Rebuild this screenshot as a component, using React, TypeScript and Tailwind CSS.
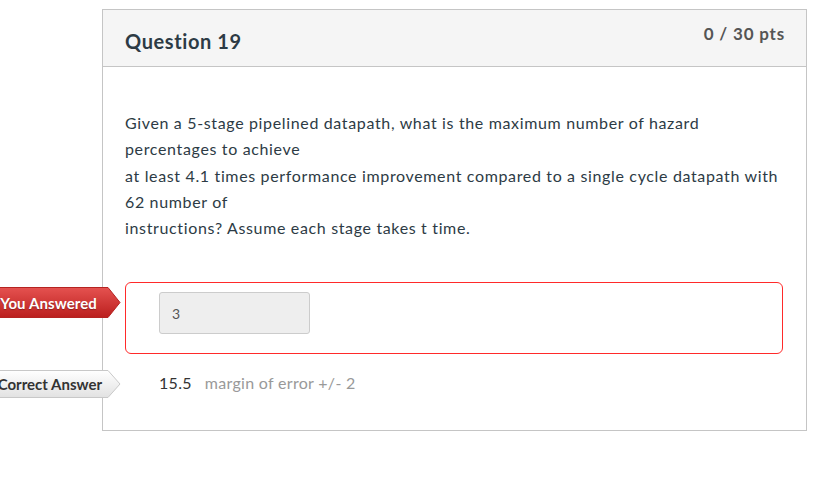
import React from "react";

function Badge({
  label,
  top,
  height,
  variant,
}: {
  label: string;
  top: number;
  height: number;
  variant: "red" | "gray";
}) {
  const w = 121;
  const tip = 13;
  const red = variant === "red";
  return (
    <div
      className="absolute left-[-125px] w-[121px]"
      style={{ top, height }}
    >
      <svg width={w} height={height} className="absolute inset-0">
        <defs>
          <linearGradient id={`g-${variant}`} x1="0" y1="0" x2="0" y2="1">
            {red ? (
              <>
                <stop offset="0" stopColor="#e55250" />
                <stop offset="1" stopColor="#bb1f1e" />
              </>
            ) : (
              <>
                <stop offset="0" stopColor="#ffffff" />
                <stop offset="1" stopColor="#e2e2e2" />
              </>
            )}
          </linearGradient>
        </defs>
        <polygon
          points={`-2,0.5 ${w - tip},0.5 ${w - 1},${height / 2} ${w - tip},${height - 0.5} -2,${height - 0.5}`}
          fill={`url(#g-${variant})`}
          stroke={red ? "#b52321" : "#c8c8c8"}
          strokeWidth={1}
        />
      </svg>
      <div
        className={`absolute inset-0 flex items-center justify-end text-[15px] font-bold ${
          red
            ? "pr-[24px] tracking-[0.1px] text-white [text-shadow:0_1px_1px_rgba(0,0,0,0.3)]"
            : "pr-[19px] tracking-[0px] text-[#333]"
        }`}
      >
        <span className="whitespace-nowrap">{label}</span>
      </div>
    </div>
  );
}

export default function App() {
  return (
    <div className="w-[827px] h-[479px] bg-white pl-[102px] pt-[9px] font-['Lato',sans-serif] overflow-hidden">
      <div className="relative w-[705px] h-[422px] border border-[#c5c5c5] bg-white">
        <div className="h-[57px] bg-[#f5f5f5] border-b border-[#c5c5c5] flex items-start justify-between pl-[22px] pr-[21px]">
          <div className="mt-[16px] text-[20px] font-bold text-[#2d3b45] tracking-[0.6px]">
            Question 19
          </div>
          <div className="mt-[11px] text-[17px] font-bold text-[#555] tracking-[0.8px]">
            0 / 30 pts
          </div>
        </div>
        <div className="pl-[22px] pr-[22px] pt-[43px]">
          <div className="text-[16px] leading-[26.25px] tracking-[0.65px] text-[#2d3b45] whitespace-nowrap">
            Given a 5-stage pipelined datapath, what is the maximum number of hazard
            <br />
            percentages to achieve
            <br />
            at least 4.1 times performance improvement compared to a single cycle datapath with
            <br />
            62 number of
            <br />
            instructions? Assume each stage takes t time.
          </div>
          <div className="relative mt-[41px]">
            <Badge label="You Answered" top={5} height={31} variant="red" />
            <div className="w-[658px] h-[72px] border border-[#ff2a2a] rounded-[6px] pl-[33px] pt-[9px]">
              <div className="w-[151px] h-[42px] bg-[#eeeeee] border border-[#cccccc] rounded-[3px] flex items-center pl-[12px] text-[14px] text-[#555]">
                3
              </div>
            </div>
          </div>
          <div className="relative mt-[15px] h-[28px]">
            <Badge label="Correct Answer" top={1} height={28} variant="gray" />
            <div className="pl-[34px] h-full flex items-center text-[16px] tracking-[0.3px]">
              <span className="text-[#333]">15.5</span>
              <span className="ml-[13px] text-[#999]">margin of error +/- 2</span>
            </div>
          </div>
        </div>
      </div>
    </div>
  );
}
